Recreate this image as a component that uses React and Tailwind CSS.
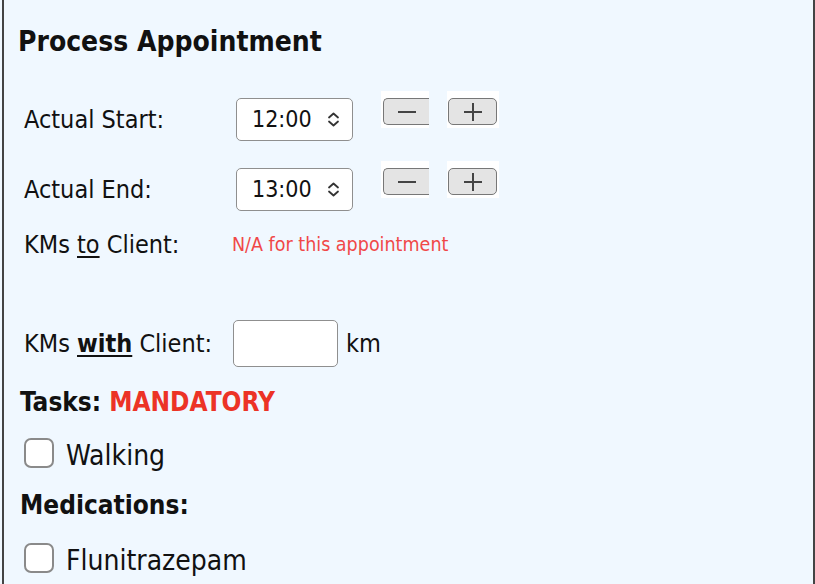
import React from "react";

function Chevrons() {
  return (
    <svg width="15" height="17" viewBox="0 0 15 17" fill="none" stroke="#333" strokeWidth="1.8" strokeLinecap="round" strokeLinejoin="round">
      <path d="M3 6.5 L7.5 2.5 L12 6.5" />
      <path d="M3 10.5 L7.5 14.5 L12 10.5" />
    </svg>
  );
}

function TimeInput({ value }) {
  return (
    <div className="w-[117px] h-[43px] bg-white border border-[#8f8f8f] rounded-[5px] flex items-center pl-[15px] pr-[11px] justify-between">
      <span className="text-[23px] text-[#111] leading-none">{value}</span>
      <Chevrons />
    </div>
  );
}

function Buttons() {
  return (
    <div className="flex -mt-[7px] ml-[28px]">
      <div className="bg-white w-[48px] h-[37px] pt-[7px] pl-[2px]">
        <div className="w-[46px] h-[27px] bg-[#e4e4e4] border-[1.5px] border-r-0 border-[#777] rounded-l-[5px] flex items-center justify-center">
          <svg width="20" height="4" viewBox="0 0 20 4"><rect x="1" y="1" width="18" height="2" fill="#444" /></svg>
        </div>
      </div>
      <div className="ml-[18px] bg-white w-[52px] h-[37px] pt-[7px] pl-[1px]">
        <div className="w-[49px] h-[27px] bg-[#e4e4e4] border-[1.5px] border-[#777] rounded-[5px] flex items-center justify-center">
          <svg width="20" height="20" viewBox="0 0 20 20"><rect x="1" y="9" width="18" height="2" fill="#444" /><rect x="9" y="1" width="2" height="18" fill="#444" /></svg>
        </div>
      </div>
    </div>
  );
}

function TimeRow({ label, value, mt }) {
  return (
    <div className={`flex items-start ${mt}`}>
      <div className="w-[232px] h-[43px] flex items-center pl-[20px] text-[25px] text-[#111]">{label}</div>
      <TimeInput value={value} />
      <Buttons />
    </div>
  );
}

function Check({ label, mt }) {
  return (
    <div className={`flex items-center h-[30px] ${mt} pl-[20px]`}>
      <div className="w-[30px] h-[30px] bg-white border-2 border-[#8a8a8a] rounded-[7px]" />
      <span className="ml-[12px] translate-y-[3px] text-[28px] text-[#111] leading-none">{label}</span>
    </div>
  );
}

export default function App() {
  return (
    <div className="w-[815px] h-[584px] overflow-hidden bg-[#f0f8ff] pl-[2px] font-['DejaVu_Sans_Condensed','DejaVu_Sans',sans-serif]">
      <div className="w-[813px] h-[584px] border-l-2 border-r-2 border-[#444] flex flex-col">
        <div className="h-[44px] mt-[20px] flex items-center pl-[14px] text-[28px] font-bold text-[#111]">
          Process Appointment
        </div>
        <TimeRow label="Actual Start:" value="12:00" mt="mt-[34px]" />
        <TimeRow label="Actual End:" value="13:00" mt="mt-[27px]" />
        <div className="flex items-center h-[30px] mt-[19px]">
          <div className="w-[212px] pl-[20px] text-[25px] text-[#111]">
            KMs <span className="underline underline-offset-[3px]">to</span> Client:
          </div>
          <span className="ml-[16px] text-[19.5px] text-[#f04848]">N/A for this appointment</span>
        </div>
        <div className="flex items-center h-[47px] mt-[60px]">
          <div className="w-[229px] pl-[20px] text-[25px] text-[#111]">
            KMs <span className="underline underline-offset-[3px] font-semibold">with</span> Client:
          </div>
          <div className="w-[105px] h-[47px] bg-white border border-[#8f8f8f] rounded-[5px]" />
          <span className="ml-[8px] text-[25px] text-[#111]">km</span>
        </div>
        <div className="flex items-center h-[30px] mt-[20px] pl-[16px] text-[26px] font-bold">
          <span className="text-[#111]">Tasks:</span>
          <span className="ml-[8px] text-[#ec3326]">MANDATORY</span>
        </div>
        <Check label="Walking" mt="mt-[21px]" />
        <div className="flex items-center h-[30px] mt-[22px] pl-[16px] text-[26px] font-bold text-[#111]">
          Medications:
        </div>
        <Check label="Flunitrazepam" mt="mt-[23px]" />
      </div>
    </div>
  );
}
